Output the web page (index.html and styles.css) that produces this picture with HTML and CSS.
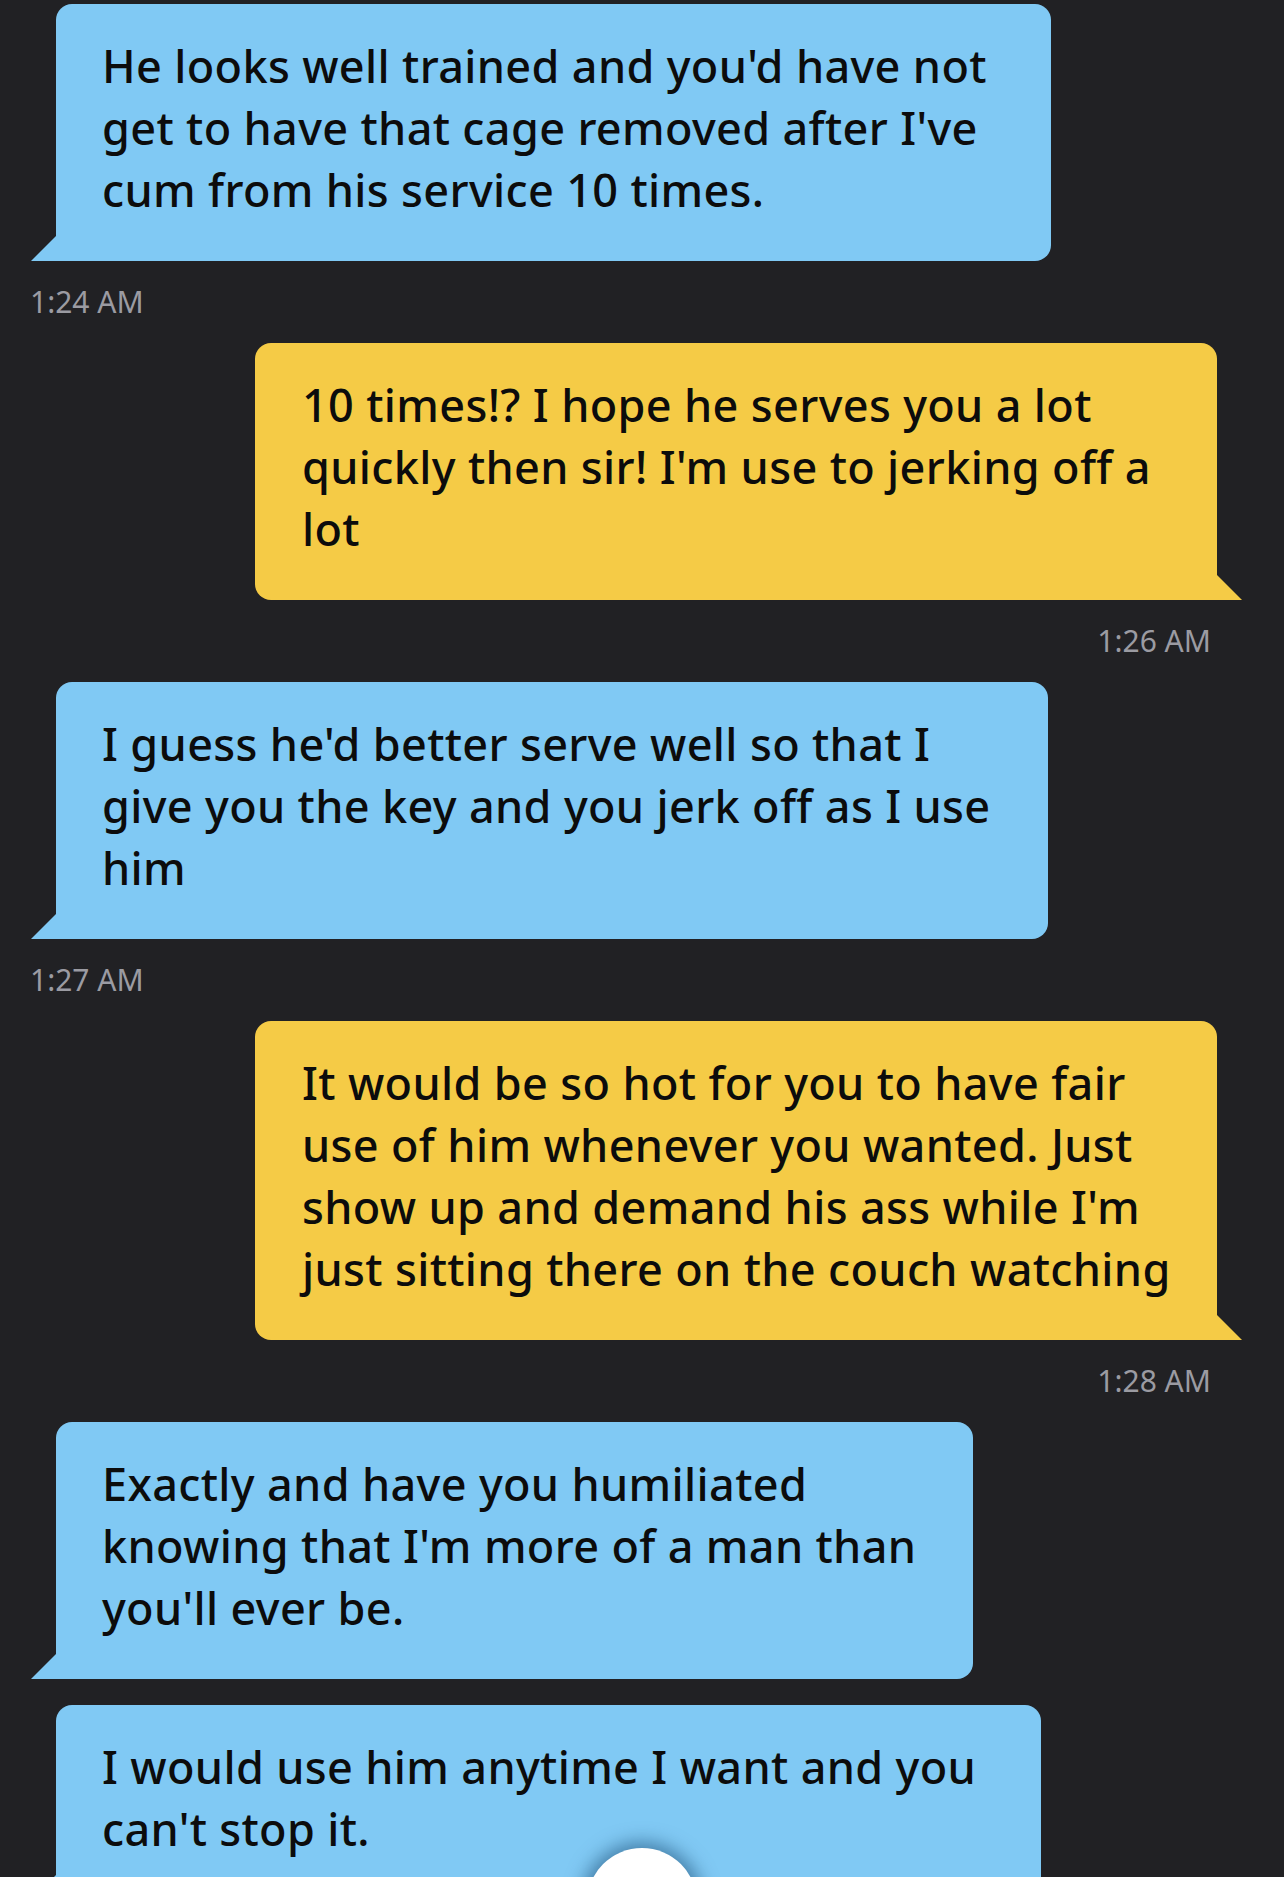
FILE: index.html
```html
<!DOCTYPE html>
<html lang="en">
<head>
<meta charset="utf-8">
<title>Chat</title>
<link rel="stylesheet" href="styles.css">
</head>
<body>
<main class="chat">
  <div class="bubble in w1"><p>He looks well trained and you'd have not<br>get to have that cage removed after I've<br>cum from his service 10 times.</p></div>
  <div class="time in-time">1:24 AM</div>

  <div class="bubble out"><p>10 times!? I hope he serves you a lot<br>quickly then sir! I'm use to jerking off a<br>lot</p></div>
  <div class="time out-time">1:26 AM</div>

  <div class="bubble in w3"><p>I guess he'd better serve well so that I<br>give you the key and you jerk off as I use<br>him</p></div>
  <div class="time in-time">1:27 AM</div>

  <div class="bubble out"><p>It would be so hot for you to have fair<br>use of him whenever you wanted. Just<br>show up and demand his ass while I'm<br>just sitting there on the couch watching</p></div>
  <div class="time out-time">1:28 AM</div>

  <div class="bubble in w5"><p>Exactly and have you humiliated<br>knowing that I'm more of a man than<br>you'll ever be.</p></div>

  <div class="bubble in w6 next"><p>I would use him anytime I want and you<br>can't stop it.</p></div>
</main>
<div class="fab"></div>
</body>
</html>
```

FILE: styles.css
```css
html, body {
  margin: 0;
  padding: 0;
  background: #212124;
}
body {
  position: relative;
  height: 1877px;
  overflow: hidden;
  font-family: "Noto Sans", "Open Sans", sans-serif;
}
.chat {
  display: flex;
  flex-direction: column;
  padding-top: 4px;
}
.bubble {
  position: relative;
  box-sizing: border-box;
  padding: 31px 40px 40px 46px;
  border-radius: 16px;
  color: #0c0c0c;
  font-size: 45px;
  font-weight: 500;
  letter-spacing: 0.35px;
  line-height: 62px;
}
.bubble p {
  margin: 0;
  white-space: nowrap;
}
.bubble.in {
  align-self: flex-start;
  margin-left: 56px;
  background: #80c9f4;
  border-bottom-left-radius: 0;
}
.bubble.in::before {
  content: "";
  position: absolute;
  left: -25px;
  bottom: 0;
  width: 25px;
  height: 25px;
  background: #80c9f4;
  clip-path: polygon(100% 0, 0 100%, 100% 100%);
}
.bubble.out {
  align-self: flex-start;
  margin-left: 255px;
  width: 962px;
  padding-left: 47px;
  background: #f5cb46;
  border-bottom-right-radius: 0;
}
.bubble.out::after {
  content: "";
  position: absolute;
  right: -25px;
  bottom: 0;
  width: 25px;
  height: 25px;
  background: #f5cb46;
  clip-path: polygon(0 0, 100% 100%, 0 100%);
}
.w1 { width: 995px; }
.w3 { width: 992px; }
.w5 { width: 917px; }
.w6 { width: 985px; }
.next { margin-top: 26px; }

.time {
  margin: 21px 0;
  font-size: 30px;
  line-height: 40px;
  color: #9b9ba2;
}
.in-time {
  padding-left: 30px;
}
.out-time {
  align-self: flex-end;
  padding-right: 73px;
}
.fab {
  position: absolute;
  left: 587px;
  top: 1848px;
  width: 110px;
  height: 110px;
  border-radius: 50%;
  background: #ffffff;
  box-shadow: 0 0 18px 6px rgba(20, 70, 110, 0.55);
}
```
